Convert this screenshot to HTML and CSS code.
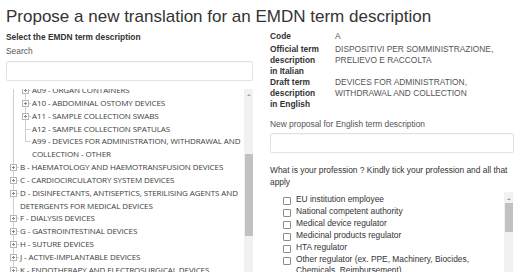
FILE: index.html
```html
<!DOCTYPE html>
<html lang="en">
<head>
<meta charset="utf-8">
<title>Propose a new translation</title>
<link rel="stylesheet" href="styles.css">
</head>
<body>
<div class="page">
  <h1 class="title">Propose a new translation for an EMDN term description</h1>
  <div class="cols">
    <div class="col">
      <div class="label-bold">Select the EMDN term description</div>
      <div class="label label-search">Search</div>
      <div class="input input-search"></div>
      <div class="tree-box">
        <div class="tree-view">
          <ul class="tree">
            <li class="open">
              <ul class="children">
                <li><span class="exp"></span><div class="row">A09 - ORGAN CONTAINERS</div></li>
                <li><span class="exp"></span><div class="row">A10 - ABDOMINAL OSTOMY DEVICES</div></li>
                <li><span class="exp"></span><div class="row">A11 - SAMPLE COLLECTION SWABS</div></li>
                <li><div class="row">A12 - SAMPLE COLLECTION SPATULAS</div></li>
                <li class="last"><div class="row">A99 - DEVICES FOR ADMINISTRATION, WITHDRAWAL AND COLLECTION - OTHER</div></li>
              </ul>
            </li>
            <li><span class="exp"></span><div class="row">B - HAEMATOLOGY AND HAEMOTRANSFUSION DEVICES</div></li>
            <li><span class="exp"></span><div class="row">C - CARDIOCIRCULATORY SYSTEM DEVICES</div></li>
            <li><span class="exp"></span><div class="row">D - DISINFECTANTS, ANTISEPTICS, STERILISING AGENTS AND DETERGENTS FOR MEDICAL DEVICES</div></li>
            <li><span class="exp"></span><div class="row">F - DIALYSIS DEVICES</div></li>
            <li><span class="exp"></span><div class="row">G - GASTROINTESTINAL DEVICES</div></li>
            <li><span class="exp"></span><div class="row">H - SUTURE DEVICES</div></li>
            <li><span class="exp"></span><div class="row">J - ACTIVE-IMPLANTABLE DEVICES</div></li>
            <li><span class="exp"></span><div class="row">K - ENDOTHERAPY AND ELECTROSURGICAL DEVICES</div></li>
            <li><span class="exp"></span><div class="row">L - REUSABLE SURGICAL INSTRUMENTS</div></li>
          </ul>
        </div>
        <div class="sbar">
          <div class="sbar-up"></div>
          <div class="sbar-space1"></div>
          <div class="sbar-thumb"></div>
        </div>
      </div>
    </div>
    <div class="col">
      <div class="info">
        <div class="info-label info-first">Code</div>
        <div class="info-value info-first">A</div>
        <div class="info-label">Official term description in Italian</div>
        <div class="info-value">DISPOSITIVI PER SOMMINISTRAZIONE, PRELIEVO E RACCOLTA</div>
        <div class="info-label">Draft term description in English</div>
        <div class="info-value">DEVICES FOR ADMINISTRATION, WITHDRAWAL AND COLLECTION</div>
      </div>
      <div class="label label-proposal">New proposal for English term description</div>
      <div class="input input-proposal"></div>
      <div class="label label-prof">What is your profession ? Kindly tick your profession and all that apply</div>
      <div class="check-box">
        <ul class="checks">
          <li><span class="cb"></span><span>EU institution employee</span></li>
          <li><span class="cb"></span><span>National competent authority</span></li>
          <li><span class="cb"></span><span>Medical device regulator</span></li>
          <li><span class="cb"></span><span>Medicinal products regulator</span></li>
          <li><span class="cb"></span><span>HTA regulator</span></li>
          <li><span class="cb"></span><span>Other regulator (ex. PPE, Machinery, Biocides, Chemicals, Reimbursement)</span></li>
          <li><span class="cb"></span><span>Health Policy expert</span></li>
        </ul>
        <div class="sbar sbar-small">
          <div class="sbar-up"></div>
          <div class="sbar-thumb"></div>
        </div>
      </div>
    </div>
  </div>
</div>
</body>
</html>
```
FILE: styles.css
```css
html, body {
  margin: 0;
  padding: 0;
  background: #fff;
  overflow: hidden;
}
body {
  font-family: "Liberation Sans", Arial, sans-serif;
  font-size: 8.4px;
  line-height: 12px;
  color: #333;
}
.page {
  padding: 0 6px;
  height: 272px;
  overflow: hidden;
}
.title {
  margin: 7px 0 0;
  font-size: 17px;
  line-height: 20px;
  font-weight: normal;
  color: #333;
}
.cols {
  display: flex;
  gap: 17px;
  margin-top: 4px;
}
.col {
  width: 247px;
  flex: none;
}
.col + .col {
  width: 244px;
}
.label-bold {
  font-weight: bold;
  line-height: 12px;
  color: #333;
}
.label {
  color: #555;
}
.label-search {
  margin-top: 2px;
}
.input {
  height: 18px;
  border: 1px solid #e2e2e2;
  border-radius: 2px;
  box-shadow: inset 0 1px 1px rgba(0,0,0,0.03);
}
.input-search {
  margin-top: 4px;
}
.tree-box {
  margin-top: 8px;
  display: flex;
  height: 200px;
}
.tree-view {
  flex: 1;
  overflow: hidden;
  position: relative;
}
.tree, .tree ul {
  list-style: none;
  margin: 0;
  padding: 0;
}
.tree {
  margin-top: -5px;
  font-family: "Open Sans", "Liberation Sans", sans-serif;
  font-size: 8px;
  line-height: 12.85px;
  color: #3c3c3c;
  letter-spacing: -0.1px;
}
.tree li {
  position: relative;
}
.tree li::before {
  content: "";
  position: absolute;
  left: 7px;
  top: 0;
  bottom: 0;
  border-left: 1px solid #d0d0d0;
}
.tree li::after {
  content: "";
  position: absolute;
  left: 7px;
  top: 6px;
  width: 6px;
  border-top: 1px solid #d0d0d0;
}
.tree li.open::after {
  display: none;
}
.tree li.last::before {
  bottom: auto;
  height: 6px;
}
.tree .children {
  margin-left: 12px;
}
.row {
  padding-left: 14px;
  padding-right: 2px;
}
.exp {
  position: absolute;
  z-index: 1;
  left: 4px;
  top: 3px;
  width: 5px;
  height: 5px;
  border: 1px solid #b5b5b5;
  background: #fff;
}
.exp::before {
  content: "";
  position: absolute;
  left: 1px;
  top: 2px;
  width: 3px;
  height: 1px;
  background: #888;
}
.exp::after {
  content: "";
  position: absolute;
  left: 2px;
  top: 1px;
  width: 1px;
  height: 3px;
  background: #888;
}
.sbar {
  width: 9px;
  flex: none;
  background: #f1f1f1;
  display: flex;
  flex-direction: column;
  align-items: center;
}
.sbar-up {
  margin-top: 5px;
  width: 0;
  height: 0;
  border-left: 2px solid transparent;
  border-right: 2px solid transparent;
  border-bottom: 2px solid #a3a3a3;
}
.sbar-space1 {
  height: 58px;
}
.sbar-thumb {
  width: 8px;
  height: 82px;
  background: #c1c1c1;
}
.info {
  display: grid;
  grid-template-columns: 65px 1fr;
  line-height: 11px;
}
.info-first {
  padding-bottom: 2px;
}
.info-label {
  font-weight: bold;
  color: #333;
  padding-right: 11px;
}
.info-value {
  color: #555;
}
.label-proposal {
  margin-top: 8px;
}
.input-proposal {
  margin-top: 3px;
}
.label-prof {
  margin-top: 11px;
  color: #333;
}
.check-box {
  margin-top: 4px;
  display: flex;
  height: 90px;
}
.checks {
  flex: 1;
  list-style: none;
  margin: 0;
  padding: 2px 0 0 13px;
  overflow: hidden;
}
.checks li {
  display: flex;
  gap: 5px;
  color: #333;
  line-height: 11.4px;
  padding-bottom: 0.6px;
}
.cb {
  flex: none;
  margin-top: 3px;
  width: 6px;
  height: 6px;
  border: 1px solid #8a8a8a;
  border-radius: 1px;
  background: #fff;
}
.sbar-small {
  margin-right: 1px;
}
.sbar-small .sbar-up {
  margin-top: 6px;
}
.sbar-small .sbar-thumb {
  margin-top: 3px;
  height: 29px;
}
```
